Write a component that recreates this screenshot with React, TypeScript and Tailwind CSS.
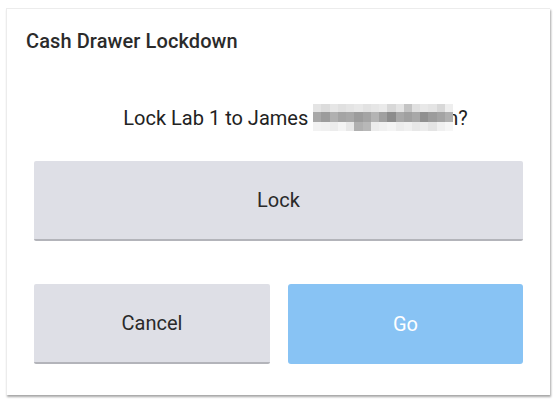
import React from "react";

// pixelated name, one row of grey levels per line
const mosaic: number[][] = [
  [0xe4, 0xdc, 0xe6, 0xe0, 0xe4, 0xe8, 0xe2, 0xe6, 0xea, 0xd8, 0xe4, 0xc4, 0xe0, 0xe8, 0xe4, 0xd8, 0xee],
  [0xa8, 0x9c, 0xb0, 0xa4, 0xa8, 0x9c, 0xa4, 0xb4, 0xa0, 0x8c, 0xa8, 0xa0, 0xa8, 0x90, 0x9c, 0xa4, 0xb0],
  [0xf2, 0xf0, 0xec, 0xf4, 0xe8, 0xb0, 0xb8, 0xec, 0xf0, 0xf4, 0xec, 0xf0, 0xe8, 0xec, 0xe4, 0xf0, 0xf6],
];
const rowHeights = [8, 10, 9];

function Mosaic() {
  return (
    <span className="inline-flex flex-col w-[140px] -mt-[2px]">
      {mosaic.map((row, r) => (
        <span key={r} className="flex w-full" style={{ height: rowHeights[r] }}>
          {row.map((v, c) => (
            <span
              key={c}
              className="flex-1"
              style={{ backgroundColor: `rgb(${v},${v},${v})` }}
            />
          ))}
        </span>
      ))}
    </span>
  );
}

function GrayButton({ label, className = "" }: { label: string; className?: string }) {
  return (
    <button
      className={`flex items-center justify-center rounded-[2px] bg-[#dedfe6] border-b-2 border-[#b3b4ba] text-[20px] text-[#2a2a2a] ${className}`}
    >
      {label}
    </button>
  );
}

export default function App() {
  return (
    <div
      className="w-[555px] h-[402px] bg-white pt-[8px] pl-[6px]"
      style={{ fontFamily: "Roboto, 'Liberation Sans', sans-serif" }}
    >
      <div className="w-[544px] h-[387px] bg-white border-l border-t border-[#ececec] shadow-[1px_2px_2px_rgba(0,0,0,0.35)] flex flex-col">
        <div className="pt-[18px] pl-[19px] text-[20px] leading-[28px] font-medium text-[#2b2b2b] tracking-[0.1px]">
          Cash Drawer Lockdown
        </div>
        <div className="mt-[49px] h-[28px] pl-[34px] flex items-center justify-center text-[20px] leading-[28px] text-[#222]">
          <span>Lock Lab 1 to James&nbsp;</span>
          <Mosaic />
          <span className="flex justify-end w-[5px] overflow-hidden">n</span>
          <span>?</span>
        </div>
        <div className="mt-[29px] px-[27px]">
          <GrayButton label="Lock" className="w-full h-[80px]" />
        </div>
        <div className="mt-[43px] px-[27px] flex gap-[18px]">
          <GrayButton label="Cancel" className="w-[236px] h-[80px]" />
          <button className="flex-1 h-[80px] flex items-center justify-center rounded-[3px] bg-[#88c3f4] text-[20px] text-white">
            Go
          </button>
        </div>
      </div>
    </div>
  );
}
